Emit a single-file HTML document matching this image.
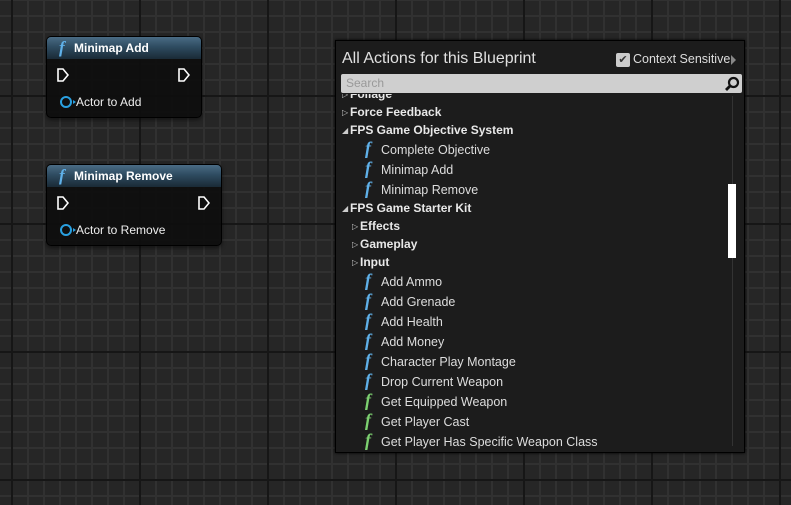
<!DOCTYPE html>
<html><head><style>
*{margin:0;padding:0;box-sizing:border-box}
body{width:791px;height:505px;overflow:hidden;position:relative;font-family:"Liberation Sans",sans-serif;
background-color:#262626;
background-image:
linear-gradient(90deg,#161616 0 2px,transparent 2px),
linear-gradient(0deg,#161616 0 2px,transparent 2px),
linear-gradient(90deg,#313131 0 2px,transparent 2px),
linear-gradient(0deg,#313131 0 2px,transparent 2px);
background-size:128px 128px,128px 128px,16px 16px,16px 16px;
background-position:11px 0,0 97px,11px 0,0 1px;}
.node{position:absolute;background:rgba(14,14,14,0.93);border:1px solid #000;border-radius:5px;box-shadow:0 2px 4px rgba(0,0,0,.5)}
.hdr{height:22px;border-radius:4px 4px 0 0;background:linear-gradient(180deg,#4a6c85 0%,#2e4b60 45%,#1a2a36 100%);color:#fff;font-weight:bold;font-size:12px;line-height:22px;padding-left:27px;position:relative}
.hdr i,.f{font-family:"Liberation Serif",serif;font-style:italic;font-weight:bold;color:#5fb0e8}
.hdr i{position:absolute;left:12px;top:0;font-size:17px}
.ex{position:absolute;width:12px;height:14px}
.pin{position:absolute;color:#eee;font-size:12px}
.pin b{position:absolute;left:-16px;top:1px;width:12px;height:12px;border:2.5px solid #2aa0e0;border-radius:50%}
.pin b:after{content:"";position:absolute;right:-6px;top:1.5px;border-left:3px solid #2aa0e0;border-top:2.5px solid transparent;border-bottom:2.5px solid transparent}
#panel{position:absolute;left:335px;top:40px;width:410px;height:413px;background:#1c1c1c;border:1px solid #000;box-shadow:0 0 3px #000}
.row{position:absolute;color:#ddd;font-size:12.5px;white-space:nowrap}
.cat{font-weight:bold;font-size:12px;color:#e8e8e8}
.t{display:inline-block;width:8px;font-size:8px;font-weight:normal;color:#ccc;vertical-align:1px}
.f{font-size:18px;position:absolute;left:-16px;top:-5px}
.g{color:#7cd070}
</style></head><body>
<div class="node" style="left:46px;top:36px;width:156px;height:82px">
<div class="hdr"><i>f</i>Minimap Add</div>
<svg class="ex" style="left:10px;top:31px" viewBox="0 0 12 14"><path d="M1 1H6L11 7L6 13H1Z" fill="none" stroke="#fff" stroke-width="1.6"/></svg>
<svg class="ex" style="left:131px;top:31px" viewBox="0 0 12 14"><path d="M1 1H6L11 7L6 13H1Z" fill="none" stroke="#fff" stroke-width="1.6"/></svg>
<div class="pin" style="left:29px;top:58px"><b></b>Actor to Add</div>
</div>
<div class="node" style="left:46px;top:164px;width:176px;height:82px">
<div class="hdr"><i>f</i>Minimap Remove</div>
<svg class="ex" style="left:10px;top:31px" viewBox="0 0 12 14"><path d="M1 1H6L11 7L6 13H1Z" fill="none" stroke="#fff" stroke-width="1.6"/></svg>
<svg class="ex" style="left:151px;top:31px" viewBox="0 0 12 14"><path d="M1 1H6L11 7L6 13H1Z" fill="none" stroke="#fff" stroke-width="1.6"/></svg>
<div class="pin" style="left:29px;top:58px"><b></b>Actor to Remove</div>
</div>
<div id="panel">
<div style="position:absolute;left:6px;top:9px;color:#e0e0e0;font-size:16px">All Actions for this Blueprint</div>
<div style="position:absolute;left:280px;top:12px;width:14px;height:14px;background:#ccc;border-radius:2px;color:#333;font-size:11px;line-height:14px;text-align:center">✔</div>
<div style="position:absolute;left:297px;top:11px;color:#ddd;font-size:12.5px">Context Sensitive</div>
<div style="position:absolute;left:395px;top:14px;border-left:5px solid #888;border-top:5px solid transparent;border-bottom:5px solid transparent"></div>
<div style="position:absolute;left:5px;top:33px;width:401px;height:19px;background:#cfcfcf;border-radius:2px;color:#999;font-size:12px;line-height:19px;padding-left:5px">Search</div>
<svg style="position:absolute;left:388px;top:35px" width="16" height="16" viewBox="0 0 16 16"><circle cx="9.5" cy="6.5" r="4.5" fill="none" stroke="#111" stroke-width="2.2"/><path d="M6 10L2 14" stroke="#111" stroke-width="2.8"/></svg>
<div style="position:absolute;left:0;top:53px;width:408px;height:356px;overflow:hidden">
<div class="row cat" style="left:6px;top:-7px"><span class="t">▷</span>Foliage</div>
<div class="row cat" style="left:6px;top:11px"><span class="t">▷</span>Force Feedback</div>
<div class="row cat" style="left:6px;top:29px"><span class="t">◢</span>FPS Game Objective System</div>
<div class="row" style="left:45px;top:49px"><span class="f">f</span>Complete Objective</div>
<div class="row" style="left:45px;top:69px"><span class="f">f</span>Minimap Add</div>
<div class="row" style="left:45px;top:89px"><span class="f">f</span>Minimap Remove</div>
<div class="row cat" style="left:6px;top:107px"><span class="t">◢</span>FPS Game Starter Kit</div>
<div class="row cat" style="left:16px;top:125px"><span class="t">▷</span>Effects</div>
<div class="row cat" style="left:16px;top:143px"><span class="t">▷</span>Gameplay</div>
<div class="row cat" style="left:16px;top:161px"><span class="t">▷</span>Input</div>
<div class="row" style="left:45px;top:181px"><span class="f">f</span>Add Ammo</div>
<div class="row" style="left:45px;top:201px"><span class="f">f</span>Add Grenade</div>
<div class="row" style="left:45px;top:221px"><span class="f">f</span>Add Health</div>
<div class="row" style="left:45px;top:241px"><span class="f">f</span>Add Money</div>
<div class="row" style="left:45px;top:261px"><span class="f">f</span>Character Play Montage</div>
<div class="row" style="left:45px;top:281px"><span class="f">f</span>Drop Current Weapon</div>
<div class="row" style="left:45px;top:301px"><span class="f g">f</span>Get Equipped Weapon</div>
<div class="row" style="left:45px;top:321px"><span class="f g">f</span>Get Player Cast</div>
<div class="row" style="left:45px;top:341px"><span class="f g">f</span>Get Player Has Specific Weapon Class</div>
</div>
<div style="position:absolute;left:396px;top:55px;width:1px;height:350px;background:#333"></div>
<div style="position:absolute;left:392px;top:143px;width:8px;height:74px;background:#fff"></div>
</div>
</body></html>
